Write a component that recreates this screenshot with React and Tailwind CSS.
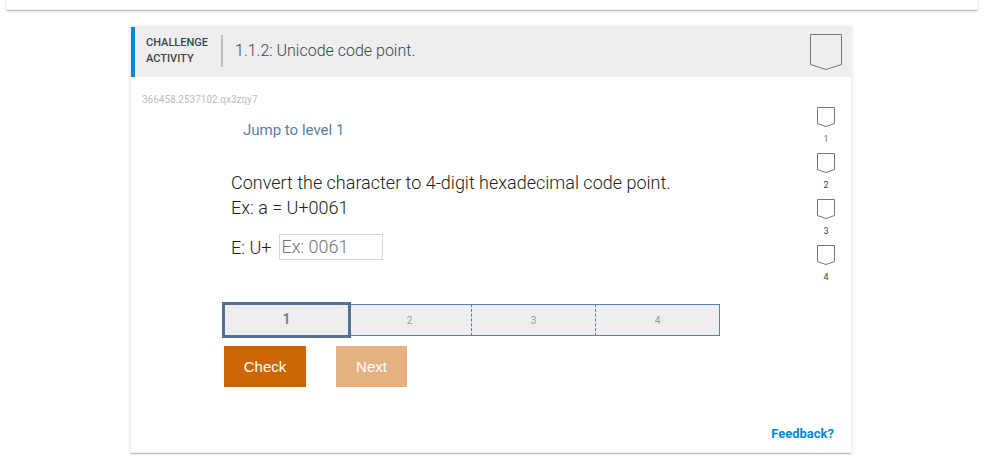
const levels = [1, 2, 3, 4];

const Chevron = ({ className, size, drop, label }) => (
  <svg
    role="img"
    aria-label={label}
    className={className}
    width={size + 1}
    height={size + drop + 1}
    viewBox={`0 0 ${size + 1} ${size + drop + 1}`}
    fill="none"
    stroke="#757575"
  >
    <path d={`M.5 .5H${size + 0.5}V${size - 0.5}L${size / 2 + 0.5} ${size + drop - 0.5}L.5 ${size - 0.5}Z`} />
  </svg>
);

const cardShadow =
  "shadow-[0_0_0_1px_#eeeeee,0_2px_1px_0_rgba(0,0,0,0.2),0_1px_4px_1px_rgba(0,0,0,0.1)]";

const Header = () => (
  <header className="flex h-[50px] items-center border-l-4 border-[#0288d1] bg-[#eeeeee] pr-[9px] pl-[11px]">
    <p className="w-[75px] pb-0.5 text-[11px] leading-4 font-medium text-[#37474f]">
      CHALLENGE ACTIVITY
    </p>
    <div className="mb-0.5 h-8 w-0.5 bg-[#bdbdbd]" />
    <h1 className="ml-3 flex-1 pb-0.5 text-base leading-6 font-light text-[#37474f]">
      1.1.2: Unicode code point.
    </h1>
    <Chevron className="block" size={31} drop={5} label="Activity not completed" />
  </header>
);

const LevelStatus = () => (
  <ol className="flex flex-col gap-2">
    {levels.map((level) => (
      <li key={level} className="flex flex-col items-center">
        <Chevron size={17} drop={3} label={`Level ${level} not completed`} />
        <span
          className={`mt-[5px] text-[9px] leading-3 ${
            level === 1 ? "text-[#5780a8]" : "text-[#37474f]"
          }`}
        >
          {level}
        </span>
      </li>
    ))}
  </ol>
);

const ProgressBar = () => (
  <ol className="flex h-9 max-w-[498px] items-center text-[#999999]">
    {levels.map((level) =>
      level === 1 ? (
        <li
          key={level}
          aria-current="step"
          className="z-10 -mr-[3px] flex h-9 w-[129px] items-center justify-center border-3 border-[#586f95] bg-[#eeeeee] pb-0.5 text-sm font-bold text-[#808080]"
        >
          {level}
        </li>
      ) : (
        <li
          key={level}
          className="flex h-8 flex-1 items-center justify-center border-y border-r border-[#5780a8] bg-[#eeeeee] text-[10px] not-last:[border-right-style:dashed]"
        >
          {level}
        </li>
      )
    )}
  </ol>
);

const App = () => {
  return (
    <div className="bg-white font-['Roboto','Liberation_Sans',sans-serif]">
      <div className={`mr-[23px] ml-[7px] h-[9px] bg-white ${cardShadow}`} />

      <main className="pt-[18px] pr-[18px] pb-5">
        <section className={`mx-auto max-w-[720px] bg-white ${cardShadow}`}>
          <Header />

          <div className="flex justify-between pt-[15px] pr-4 pl-[11px]">
            <div className="min-w-0 flex-1">
              <p className="text-[10px] leading-4 text-[#bdbdbd]">366458.2537102.qx3zqy7</p>

              <div className="pl-20">
                <button type="button" className="mt-[10px] ml-[21px] block text-[15px] leading-6 text-[#5780a8]">
                  Jump to level 1
                </button>

                <div className="mt-7 ml-[9px] text-lg leading-[25px] font-light text-[#212121]">
                  <p>Convert the character to 4-digit hexadecimal code point.</p>
                  <p>Ex: a = U+0061</p>
                  <div className="mt-[14px] flex items-center gap-2">
                    <label htmlFor="answer">E: U+</label>
                    <input
                      id="answer"
                      type="text"
                      placeholder="Ex: 0061"
                      className="h-[26px] w-[104px] border border-[#cfd8dc] px-px pb-px text-lg font-light outline-none placeholder:text-[#757575]"
                    />
                  </div>
                </div>

                <div className="mt-[42px]">
                  <ProgressBar />
                </div>

                <div className="mt-2 ml-0.5 flex gap-[30px] font-['Liberation_Sans',sans-serif]">
                  <button type="button" className="h-[41px] w-[82px] bg-[#cc6600] pt-px text-[15px] text-white">
                    Check
                  </button>
                  <button type="button" disabled className="h-[41px] w-[71px] bg-[#e6b180] pt-px text-[15px] text-white">
                    Next
                  </button>
                </div>
              </div>
            </div>

            <div className="pt-[15px]">
              <LevelStatus />
            </div>
          </div>

          <footer className="flex justify-end pt-[37px] pr-[17px] pb-2">
            <a href="#feedback" className="text-[13px] leading-5 font-bold text-[#0288d1]">
              Feedback?
            </a>
          </footer>
        </section>
      </main>
    </div>
  );
};

export default App;
